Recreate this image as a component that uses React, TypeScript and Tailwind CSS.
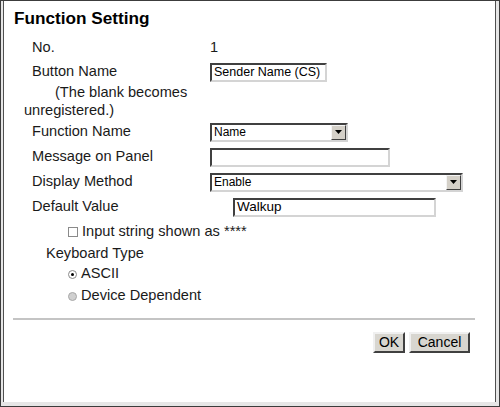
import React from "react";

const font = { fontFamily: '"Liberation Sans", Arial, sans-serif' };

// sunken text box like old windows controls
const TextBox: React.FC<{ value: string; className: string }> = ({ value, className }) => (
  <div
    className={`h-[19px] border-2 border-t-[#404040] border-l-[#404040] border-b-[#d4d4d4] border-r-[#d4d4d4] bg-white flex items-center px-[2px] text-[12.5px] text-black leading-none ${className}`}
  >
    {value}
  </div>
);

const Select: React.FC<{ value: string; className: string }> = ({ value, className }) => (
  <div
    className={`h-[19px] border-2 border-t-[#404040] border-l-[#404040] border-b-[#d4d4d4] border-r-[#d4d4d4] bg-white flex items-center text-[12px] text-black leading-none ${className}`}
  >
    <span className="flex-1 pl-[2px]">{value}</span>
    <div className="w-[15px] h-[15px] bg-[#d4d0c8] border border-t-[#f4f4f4] border-l-[#f4f4f4] border-b-[#404040] border-r-[#404040] flex items-center justify-center">
      <svg width="7" height="4" viewBox="0 0 7 4">
        <path d="M0 0h7L3.5 4z" fill="#000" />
      </svg>
    </div>
  </div>
);

const Row: React.FC<{ h: string; children: React.ReactNode; className?: string }> = ({ h, children, className }) => (
  <div className={`flex items-center ${h} ${className ?? ""}`}>{children}</div>
);

const Label: React.FC<{ children: React.ReactNode }> = ({ children }) => (
  <div className="w-[197px] shrink-0 pl-[19px]">{children}</div>
);

export default function App() {
  return (
    <div
      className="w-[500px] h-[407px] border border-[#3c3c3c] bg-[#e6e6e6] flex text-[14.6px] text-[#1a1a1a]"
      style={font}
    >
      <div className="flex-1 ml-[2px] mr-[3px] mb-[4px] border-l border-r border-[#505050] bg-white flex flex-col pl-[9px] pr-[20px]">
        <Row h="h-[35px]">
          <h1 className="text-[17.2px] font-bold text-black pl-[1px]">Function Setting</h1>
        </Row>
        <Row h="h-[24px]">
          <Label>No.</Label>
          <span>1</span>
        </Row>
        <Row h="h-[24px]">
          <Label>Button Name</Label>
          <TextBox value="Sender Name (CS)" className="w-[117px]" />
        </Row>
        <Row h="h-[18px]" className="pl-[42px]">
          (The blank becomes
        </Row>
        <Row h="h-[17px]" className="pl-[11px]">
          unregistered.)
        </Row>
        <Row h="h-[26px]">
          <Label>Function Name</Label>
          <Select value="Name" className="w-[138px]" />
        </Row>
        <Row h="h-[24px]">
          <Label>Message on Panel</Label>
          <TextBox value="" className="w-[180px]" />
        </Row>
        <Row h="h-[26px]">
          <Label>Display Method</Label>
          <Select value="Enable" className="w-[253px]" />
        </Row>
        <Row h="h-[24px]">
          <Label>Default Value</Label>
          <TextBox value="Walkup" className="w-[203px] ml-[23px] text-[13.5px]" />
        </Row>
        <Row h="h-[25px]" className="pl-[55px]">
          <div className="w-[10px] h-[10px] border border-[#8a8a8a] bg-white mr-[4px]" />
          <span>Input string shown as ****</span>
        </Row>
        <Row h="h-[19px]" className="pl-[33px]">
          Keyboard Type
        </Row>
        <Row h="h-[22px]" className="pl-[55px]">
          <div className="w-[9px] h-[9px] rounded-full border border-[#8a8a8a] bg-white flex items-center justify-center mr-[4px]">
            <div className="w-[3px] h-[3px] rounded-full bg-black" />
          </div>
          <span>ASCII</span>
        </Row>
        <Row h="h-[22px]" className="pl-[55px]">
          <div className="w-[9px] h-[9px] rounded-full border border-[#a8a8a8] bg-[#d0d0d0] mr-[4px]" />
          <span>Device Dependent</span>
        </Row>
        <div className="h-[23px] flex items-center">
          <div className="flex-1 h-[2px] bg-[#c4c4c4]" />
        </div>
        <div className="h-[24px] flex items-center justify-end gap-[4px] pr-[5px]">
          <button className="w-[32px] h-[21px] bg-[#d8d6d0] border-2 border-t-[#f0f0f0] border-l-[#f0f0f0] border-b-[#404040] border-r-[#404040] text-[14px] text-black leading-none">
            OK
          </button>
          <button className="w-[61px] h-[21px] bg-[#d8d6d0] border-2 border-t-[#f0f0f0] border-l-[#f0f0f0] border-b-[#404040] border-r-[#404040] text-[14px] text-black leading-none">
            Cancel
          </button>
        </div>
      </div>
    </div>
  );
}
